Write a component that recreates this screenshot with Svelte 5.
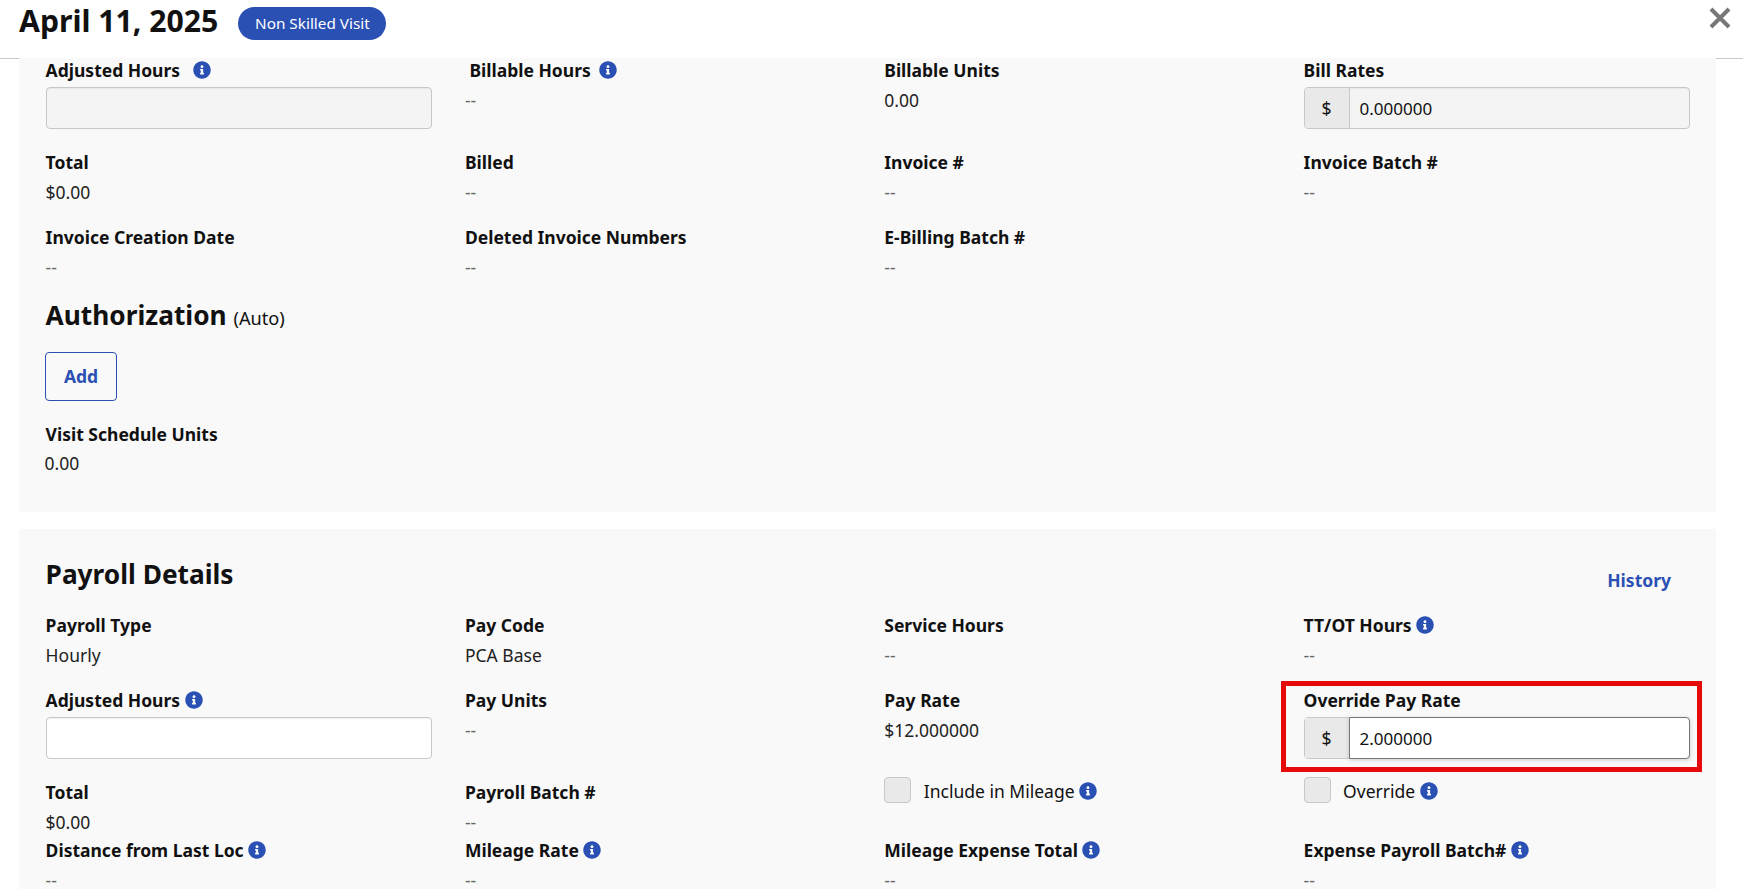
<script lang="ts">
  // Visit detail modal: billing and payroll panels, scrolled part-way down.
  type Field = {
    label: string;
    value?: string;
    info?: boolean;
    infoGap?: "mid" | "wide";
    nudge?: boolean;
    input?: "plain" | "disabled";
    money?: { value: string; active?: boolean };
    check?: string;
  };

  const billingTop: Field[] = [
    { label: "Adjusted Hours", info: true, infoGap: "wide", input: "disabled" },
    { label: "Billable Hours", info: true, infoGap: "mid", value: "--", nudge: true },
    { label: "Billable Units", value: "0.00" },
    { label: "Bill Rates", money: { value: "0.000000" } },
    { label: "Total", value: "$0.00" },
    { label: "Billed", value: "--" },
    { label: "Invoice #", value: "--" },
    { label: "Invoice Batch #", value: "--" },
    { label: "Invoice Creation Date", value: "--" },
    { label: "Deleted Invoice Numbers", value: "--" },
    { label: "E-Billing Batch #", value: "--" },
  ];

  const payroll: Field[] = [
    { label: "Payroll Type", value: "Hourly" },
    { label: "Pay Code", value: "PCA Base" },
    { label: "Service Hours", value: "--" },
    { label: "TT/OT Hours", info: true, value: "--" },
    { label: "Adjusted Hours", info: true, input: "plain" },
    { label: "Pay Units", value: "--" },
    { label: "Pay Rate", value: "$12.000000" },
    { label: "Override Pay Rate", money: { value: "2.000000", active: true } },
    { label: "Total", value: "$0.00" },
    { label: "Payroll Batch #", value: "--" },
    { label: "", check: "Include in Mileage" },
    { label: "", check: "Override" },
  ];

  const mileage: Field[] = [
    { label: "Distance from Last Loc", info: true, value: "--" },
    { label: "Mileage Rate", info: true, value: "--" },
    { label: "Mileage Expense Total", info: true, value: "--" },
    { label: "Expense Payroll Batch#", info: true, value: "--" },
  ];
</script>

{#snippet infoIcon(gap = "")}
  <svg class="info {gap}" viewBox="0 0 512 512" aria-hidden="true">
    <path d="M256 8C119.043 8 8 119.083 8 256c0 136.997 111.043 248 248 248s248-111.003 248-248C504 119.083 392.957 8 256 8zm0 110c23.196 0 42 18.804 42 42s-18.804 42-42 42-42-18.804-42-42 18.804-42 42-42zm56 254c0 6.627-5.373 12-12 12h-88c-6.627 0-12-5.373-12-12v-24c0-6.627 5.373-12 12-12h12v-64h-12c-6.627 0-12-5.373-12-12v-24c0-6.627 5.373-12 12-12h64c6.627 0 12 5.373 12 12v100h12c6.627 0 12 5.373 12 12v24z" />
  </svg>
{/snippet}

{#snippet fieldGrid(fields: Field[])}
  <div class="grid">
    {#each fields as f}
      <div class="field">
        {#if f.check}
          <label class="check">
            <span class="box"></span>
            <span class="check-text">{f.check}</span>
            {@render infoIcon()}
          </label>
        {:else}
          <div class="label" class:nudge={f.nudge}>
            {f.label}{#if f.info}{@render infoIcon(f.infoGap)}{/if}
          </div>
          {#if f.input}
            <div class="input" class:disabled={f.input === "disabled"}></div>
          {:else if f.money}
            <div class="group" class:active={f.money.active}>
              <span class="addon">$</span>
              <span class="group-value">{f.money.value}</span>
            </div>
          {:else}
            <div class="value" class:dash={f.value === "--"}>{f.value}</div>
          {/if}
        {/if}
      </div>
    {/each}
  </div>
{/snippet}

<div class="modal">
  <header class="head">
    <h1>April 11, 2025</h1>
    <span class="badge">Non Skilled Visit</span>
    <button class="close" aria-label="Close">
      <svg viewBox="0 0 22 22" width="22" height="22">
        <path d="M2 2 20 20M20 2 2 20" />
      </svg>
    </button>
  </header>

  <main class="body">
    <section class="panel billing">
      {@render fieldGrid(billingTop)}
      <h2 class="auth-title">Authorization <small>(Auto)</small></h2>
      <button class="add">Add</button>
      <div class="units">
        <div class="label">Visit Schedule Units</div>
        <div class="value units-value">0.00</div>
      </div>
    </section>

    <section class="panel payroll">
      <div class="panel-head">
        <h2>Payroll Details</h2>
        <span class="history">History</span>
      </div>
      {@render fieldGrid(payroll)}
      <div class="mileage">{@render fieldGrid(mileage)}</div>
      <div class="highlight"></div>
    </section>
  </main>
</div>

<style>
  :global(body) {
    margin: 0;
    background: #fff;
    overflow: hidden;
  }
  .modal {
    height: 889px;
    overflow: hidden;
    font-family: "Noto Sans", sans-serif;
    font-size: 17.5px;
    color: #111;
  }
  .head {
    display: flex;
    align-items: flex-start;
    height: 58px;
    border-bottom: 1px solid #c8c8c8;
    padding-left: 19px;
    position: relative;
  }
  h1 {
    margin: 0;
    font-size: 30.2px;
    line-height: 42px;
    font-weight: 700;
  }
  .badge {
    margin: 7px 0 0 20px;
    width: 148px;
    height: 33px;
    line-height: 32px;
    text-align: center;
    border-radius: 17px;
    background: #2a50b4;
    color: #fff;
    font-size: 15.3px;
  }
  .close {
    position: absolute;
    top: 7px;
    left: 1709px;
    padding: 0;
    border: 0;
    background: none;
    line-height: 0;
  }
  .close path {
    fill: none;
    stroke: #777;
    stroke-width: 4;
  }

  .body {
    padding: 0 27px 0 19px;
  }
  .panel {
    background: #f9f9f9;
    padding: 0 0 0 26.6px;
    position: relative;
  }
  .billing {
    height: 454px;
    box-sizing: border-box;
    margin-bottom: 17px;
    margin-top: -1px;
  }
  .payroll {
    height: 400px;
  }

  .grid {
    display: grid;
    grid-template-columns: repeat(4, 386.33px);
    column-gap: 33px;
    row-gap: 21px;
  }
  .label {
    line-height: 24px;
    font-weight: 700;
    white-space: nowrap;
    margin-bottom: 6px;
    display: flex;
    align-items: center;
  }
  .label.nudge {
    padding-left: 4.5px;
  }
  .value {
    line-height: 24px;
    color: #222;
  }
  .value.dash {
    color: #666;
  }
  .info {
    width: 18px;
    height: 18px;
    margin-left: 4.5px;
    fill: #2a50b4;
    flex: none;
  }
  .info.mid {
    margin-left: 8.5px;
  }
  .info.wide {
    margin-left: 12.5px;
  }

  .input,
  .group {
    box-sizing: border-box;
    height: 42px;
    margin-top: -1px;
    border: 1px solid #c8c8c8;
    border-radius: 4px;
    background: #fff;
    box-shadow: inset 0 1px 1px rgba(0, 0, 0, 0.05);
  }
  .input.disabled {
    background: #f4f4f4;
  }
  .group {
    display: flex;
    background: #f4f4f4;
    overflow: hidden;
  }
  .addon {
    flex: none;
    width: 45px;
    box-sizing: border-box;
    border-right: 1px solid #c8c8c8;
    background: #e9e9e9;
    text-align: center;
    line-height: 40px;
  }
  .group-value {
    padding-left: 10px;
    line-height: 41px;
    font-size: 17px;
  }
  .group.active {
    overflow: visible;
    background: #e9e9e9;
  }
  .group.active .addon {
    width: 44px;
    border-right: 0;
  }
  .group.active .group-value {
    flex: 1;
    margin: -1px -1px -1px 0;
    background: #fff;
    border: 1px solid #777;
    border-radius: 0 4px 4px 0;
    box-shadow: 0 1px 4px rgba(0, 0, 0, 0.18);
  }

  .check {
    display: flex;
    align-items: center;
    margin-top: -3px;
  }
  .check-text,
  .check .info {
    margin-top: 2px;
  }
  .box {
    flex: none;
    width: 25px;
    height: 24px;
    margin-right: 12.5px;
    border: 1px solid #c8c8c8;
    border-radius: 4px;
    background: #e9e9e9;
  }

  .auth-title,
  .panel-head h2 {
    margin: 0;
    font-size: 26.25px;
    font-weight: 700;
    line-height: 36px;
  }
  .auth-title {
    margin-top: 18px;
  }
  .auth-title small {
    font-size: 18.2px;
    font-weight: 400;
  }
  .add {
    display: block;
    box-sizing: border-box;
    margin-top: 16px;
    margin-left: -0.6px;
    width: 72px;
    height: 49px;
    padding: 0 0 2px;
    border: 1px solid #2a50b4;
    border-radius: 4px;
    background: transparent;
    color: #2a50b4;
    font: 700 17.5px "Noto Sans", sans-serif;
  }
  .units {
    margin-top: 21px;
  }
  .units-value {
    margin-left: -1px;
    margin-top: -1px;
  }

  .panel-head {
    display: flex;
    justify-content: space-between;
    height: 84px;
    padding: 27px 45px 0 0;
    box-sizing: border-box;
  }
  .history {
    color: #2a50b4;
    font-weight: 700;
    margin-top: 12px;
  }
  .mileage {
    margin-top: 4px;
  }
  .highlight {
    position: absolute;
    left: 1262px;
    top: 152px;
    width: 421px;
    height: 91px;
    box-sizing: border-box;
    border: 5px solid #e60a0a;
    pointer-events: none;
  }
</style>
